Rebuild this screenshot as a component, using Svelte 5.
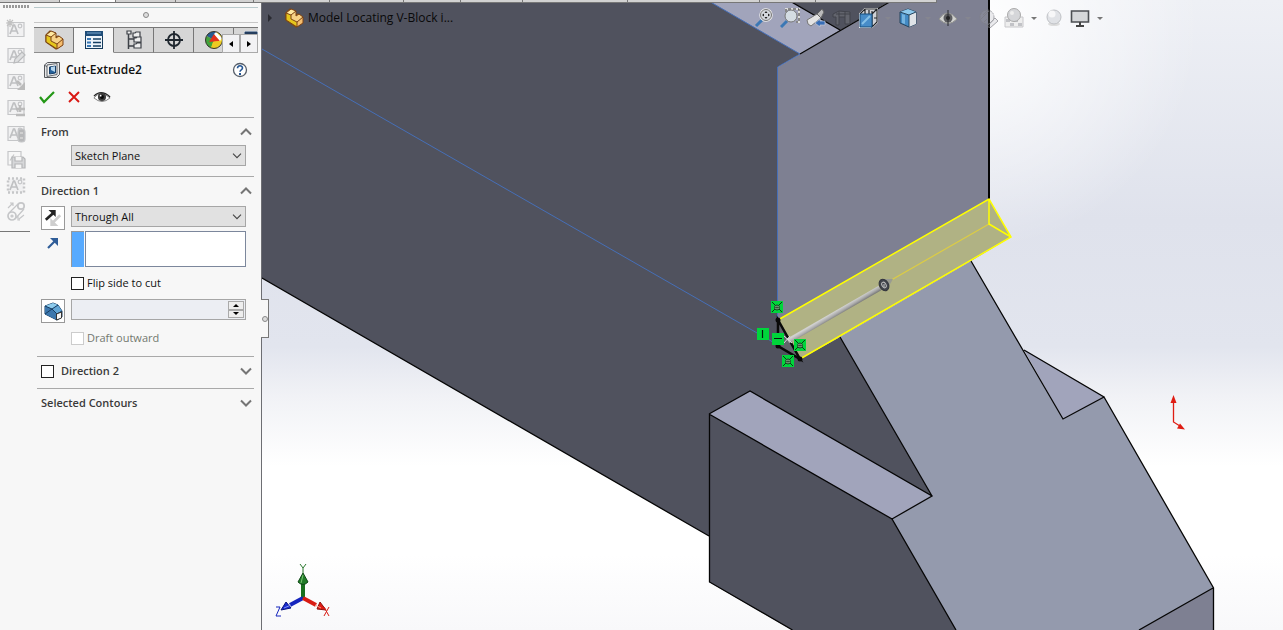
<script>
  const commandTabs = [60, 56, 60, 78, 76, 74, 57, 61, 106, 133, 56, 121];
  const annotationTools = ['New note', 'Edit note', 'Place note', 'Add or remove', 'Note traffic', 'Save note', 'Stamp note', 'Link notes'];
  const marks = [[771, 301], [794, 339], [782, 355]];
  let fromPlane = $state('Sketch Plane');
  let endCondition = $state('Through All');
  let flipSide = $state(false);
  let direction2 = $state(false);
  let draft = $state('');
</script>

{#snippet part()}
  <svg width="20" height="20" viewBox="0 0 20 20" aria-hidden="true">
    <path d="M2 5 6 1l5 2v4l3-1 4 3v6l-6 4L2 12Z" fill="#f0cd3c" stroke="#7b4a14" stroke-width="1.2" stroke-linejoin="round" />
    <path d="m2 5 5 2v4l6 3v5L2 12Z" fill="#e5c61c" />
    <path d="m2 5 5-4 5 2-5 4Z" fill="#ffe9a0" />
    <path d="m7 11 6 3 6-5-4-3-3 2V3L7 7Z" fill="#f7d286" />
    <path d="m13 14 6-5v6l-6 4Z" fill="#f5bd6e" />
    <path d="M2 5v7l11 7v-5L7 11V7L2 5l5-4 5 2v5l3-2 4 3v6l-6 4M7 7l5-4m1 11 6-5" fill="none" stroke="#7d4315" stroke-width="1" stroke-linejoin="round" />
  </svg>
{/snippet}

{#snippet chevron(up)}
  <svg class="chevron" width="12" height="8" viewBox="0 0 12 8" aria-hidden="true">
    <path d={up ? 'm1 6.500 5-5 5 5' : 'm1 1.500 5 5 5-5'} fill="none" stroke="#757575" stroke-width="2" />
  </svg>
{/snippet}

{#snippet selectArrow()}
  <svg class="select-arrow" width="10" height="6" viewBox="0 0 10 6" aria-hidden="true">
    <path d="m1 .7 4 4 4-4" fill="none" stroke="#444" stroke-width="1.1" />
  </svg>
{/snippet}

{#snippet annotation(i)}
  <svg width="20" height="20" viewBox="0 0 20 20" aria-hidden="true" fill="none" stroke="#c5c6c8" stroke-width="1.2">
    {#if i < 5 || i === 6}
      <path d="M2 3.500h16v14H2Z" fill="#f1f1f2" stroke-dasharray={i === 6 ? '2 2' : 'none'} stroke-width={i === 6 ? 2.500 : 1.200} />
      <path d="m4 15 3.500-9h1L12 15M5.500 12h5" stroke="#bfc0c2" stroke-width="1.700" />
      <circle cx="14" cy="7" r="1.800" />
    {/if}
    {#if i === 0}
      <path d="M4 0v8M0 4h8M1 1l6 6M7 1 1 7" stroke="#c2c2c2" />
    {:else if i === 1}
      <path d="m8 18 1-4 7-7 3 3-7 7Z" fill="#dedfe0" stroke="#b9babc" />
    {:else if i === 2}
      <path d="m11 10 4 4" stroke="#bbb" stroke-width="2.500" /><path d="M19 11v8h-8Z" fill="#bbb" stroke="none" />
    {:else if i === 3}
      <path d="M14 8v7m-4-3h9M10 18h9" stroke="#bbb" stroke-width="2.500" />
    {:else if i === 4}
      <rect x="12" y="6" width="7" height="13" rx="3" fill="#b7b8ba" />
      <path d="M14 10h3M14 15h3" stroke="#d0d0d0" stroke-width="2" />
    {:else if i === 5}
      <path d="M2 2.500h13V16H2Zm2 9 4-6" />
      <path d="M6 8h11l2 2v9H6Z" fill="#d6d7d9" stroke="#b5b6b8" />
      <path d="M9 8v4h7V8M9 19v-4h7v4" fill="#f5f5f5" stroke="#b5b6b8" />
    {:else if i === 7}
      <circle cx="6" cy="15" r="4" stroke-width="1.700" /><circle cx="6" cy="15" r="1" />
      <circle cx="15" cy="5" r="3.200" stroke-width="1.700" />
      <path d="m3 12 9-9m-3 15 9-10M2 7l5-5M4 2h3v3m6 13 5-4m-4 5h-2v-4" />
    {/if}
  </svg>
{/snippet}

<div class="app">
  <div class="command-strip" aria-hidden="true">
    {#each commandTabs as size, i}
      <span class:active={i === 1} style:flex-grow={size}></span>
    {/each}
  </div>

  <nav class="annotations" aria-label="Annotations">
    <div class="grip"></div>
    {#each annotationTools as label, i}
      <button type="button" aria-label={label}>{@render annotation(i)}</button>
    {/each}
    <hr />
  </nav>

  <aside class="panel">
    <div class="pin-bar"><i class="knob"></i></div>
    <div class="tabs">
      <button type="button" aria-label="Feature tree">{@render part()}</button>
      <button type="button" class="current" aria-label="Properties">
        <svg width="20" height="20" viewBox="0 0 20 20" aria-hidden="true">
          <rect x="1.500" y="1.500" width="17" height="17" fill="#eef4fa" stroke="#153a5b" />
          <path d="M1 1h18v5H1Z" fill="#204d78" /><path d="M3 3h14" stroke="#76a6cd" />
          <path d="M3 8h4v2H3Zm0 3.500h4v2H3ZM3 15h4v2H3Z" fill="#3878b5" />
          <path d="M9 9h8M9 12.500h8M9 16h8" stroke="#163f63" stroke-width="1.400" />
        </svg>
      </button>
      <button type="button" aria-label="Configurations">
        <svg width="20" height="20" viewBox="0 0 20 20" aria-hidden="true" fill="#eee" stroke="#3e4248" stroke-width="1.200">
          <path d="M4.500 2v17M5 9h5M5 16h5" fill="none" stroke-width="1.500" />
          <path d="M3 1h4v3H3ZM9 3h2l1-1h4v5H9Zm1 5h2l1-1h4v5h-7Zm0 6h2l1-1h4v5h-7Z" />
        </svg>
      </button>
      <button type="button" aria-label="Dimensions">
        <svg width="20" height="20" viewBox="0 0 20 20" aria-hidden="true" fill="none" stroke="#1e262e" stroke-width="1.800">
          <circle cx="10" cy="10" r="6" /><path d="M10 1v18M1 10h18" />
        </svg>
      </button>
      <button type="button" aria-label="Display">
        <svg width="20" height="20" viewBox="0 0 20 20" aria-hidden="true">
          <circle cx="10" cy="10" r="8.500" fill="#f3d72c" />
          <path d="M10 10 2.500 6A8.500 8.500 0 0 0 7 18Z" fill="#42a33a" />
          <path d="M10 10 2.500 6A8.500 8.500 0 0 1 12 2Z" fill="#265d91" />
          <path d="m10 4 6 7-11 1Z" fill="#e2321e" /><path d="m12 2 6 6-2 3-6-7Z" fill="#fff" />
          <path d="m7 18 2-6 7-1 2 2-6 6Z" fill="#edca22" />
          <circle cx="10" cy="10" r="8.500" fill="none" stroke="#333" />
        </svg>
      </button>
      <button type="button" class="clipped" aria-label="Appearance tasks">
        <svg width="14" height="18" viewBox="0 0 14 18" aria-hidden="true"><path d="M1 1h12v15H1Z" fill="#90afd0" stroke="#355b89" /><path d="M1 2h12" stroke="#243d5e" stroke-width="2" /></svg>
      </button>
      <div class="tab-scroll">
        <button type="button" aria-label="Previous tabs"><svg width="4" height="6" viewBox="0 0 4 6"><path d="M4 0v6L0 3Z" /></svg></button>
        <button type="button" aria-label="Next tabs"><svg width="4" height="6" viewBox="0 0 4 6"><path d="M0 0v6l4-3Z" /></svg></button>
      </div>
    </div>

    <header>
      <svg width="18" height="18" viewBox="0 0 18 18" aria-hidden="true">
        <path d="m1.500 4 3-2.500h12v12l-3 3h-12Z" fill="#e6e7e9" stroke="#55585c" />
        <path d="m4 4 10-1.500v11L4 15.500ZM1.500 4 4 6" fill="#f3f3f3" stroke="#62666b" />
        <path d="m6.500 6 6-1v7l-6 1Z" fill="#24609a" stroke="#173f69" /><path d="m8 6 4-.7V11L8 9Z" fill="#b4d4ec" />
      </svg>
      <h1>Cut-Extrude2</h1>
      <button type="button" aria-label="Help">
        <svg width="16" height="16" viewBox="0 0 16 16" aria-hidden="true" fill="none">
          <circle cx="8" cy="8" r="6.500" fill="#fff" stroke="#555d68" stroke-width="1.300" />
          <path d="M5.500 6.300c0-3.300 5-3.300 5-.3C10.500 8 8 7.600 8 9.700" stroke="#245694" stroke-width="1.600" /><path d="M7 11h2v2H7Z" fill="#245694" />
        </svg>
      </button>
    </header>

    <div class="actions">
      <button type="button" aria-label="OK"><svg width="16" height="14" viewBox="0 0 16 14"><path d="m1 7 4 5L15 2" fill="none" stroke="#249817" stroke-width="2.200" /></svg></button>
      <button type="button" aria-label="Cancel"><svg width="12" height="12" viewBox="0 0 12 12"><path d="m1 1 10 10M11 1 1 11" stroke="#d91712" stroke-width="1.900" /></svg></button>
      <button type="button" aria-label="Preview">
        <svg width="18" height="14" viewBox="0 0 20 14"><path d="M1 8Q8-1 19 8q-9 8-18 0Z" fill="#fff" stroke="#777" /><circle cx="10" cy="7" r="4.500" fill="#3c3c3c" /><circle cx="10" cy="7" r="2.200" fill="#080808" /><circle cx="8.500" cy="5.500" r="1" fill="#fff" /><path d="M1 6Q9-2 19 7" fill="none" stroke="#252525" stroke-width="1.300" /></svg>
      </button>
    </div>

    <section>
      <h2><span>From</span><button type="button" aria-label="Collapse From">{@render chevron(true)}</button></h2>
      <div class="fields">
        <label class="select second"><select aria-label="Start condition" bind:value={fromPlane}><option>Sketch Plane</option></select>{@render selectArrow()}</label>
      </div>
    </section>

    <section class="direction">
      <h2><span>Direction 1</span><button type="button" aria-label="Collapse Direction 1">{@render chevron(true)}</button></h2>
      <div class="fields">
        <button type="button" class="tool" aria-label="Reverse direction">
          <svg width="18" height="18" viewBox="0 0 20 20"><path d="M18 7 9 16" fill="none" stroke="#cecece" stroke-width="3" /><path d="M7 10v9h9Z" fill="#cecece" /><path d="M2 12 11 4" stroke="#222" stroke-width="3" /><path d="M5 1h8v8Z" fill="#222" /></svg>
        </button>
        <label class="select"><select aria-label="End condition" bind:value={endCondition}><option>Through All</option></select>{@render selectArrow()}</label>
        <svg class="blue-arrow" width="14" height="14" viewBox="0 0 14 14" aria-hidden="true"><path d="M2 12 9 5" stroke="#2f5d98" stroke-width="2.200" /><path d="M4 2h8v8Z" fill="#2f5d98" /></svg>
        <div class="selection"><i></i><textarea aria-label="Direction of extrusion"></textarea></div>
        <label class="check second"><input type="checkbox" bind:checked={flipSide} />Flip side to cut</label>
        <button type="button" class="tool" aria-label="Draft on or off">
          <svg width="20" height="20" viewBox="0 0 20 20"><path d="m2 5 8-3 5 2 4 6v6l-5 3-12-6Z" fill="#2d699e" stroke="#173c61" /><path d="m2 5 8-3 5 2-6 4Z" fill="#8dcbed" /><path d="m9 8 6-4 4 6-5 3Z" fill="#61a5d5" /><path d="m2 5 7 3 5 5v6L2 13Z" fill="#3c77ad" /><path d="m2 13 7-5M9 8l5 5 5-3M2 5l7 3 6-4" stroke="#173c61" fill="none" /><path d="m13.500 13 5-2v6l-5 2Z" fill="#f6f6f6" stroke="#333" /></svg>
        </button>
        <div class="spinner"><input aria-label="Draft angle" type="text" bind:value={draft} /><span><button type="button" aria-label="Increase"><svg width="6" height="3" viewBox="0 0 6 3"><path d="M0 3h6L3 0Z" /></svg></button><button type="button" aria-label="Decrease"><svg width="6" height="3" viewBox="0 0 6 3"><path d="M0 0h6L3 3Z" /></svg></button></span></div>
        <label class="check second off"><input type="checkbox" disabled />Draft outward</label>
      </div>
    </section>

    <section class="closed">
      <h2><label class="check"><input type="checkbox" bind:checked={direction2} />Direction 2</label><button type="button" aria-label="Expand Direction 2">{@render chevron(false)}</button></h2>
    </section>
    <section class="closed">
      <h2><span>Selected Contours</span><button type="button" aria-label="Expand Selected Contours">{@render chevron(false)}</button></h2>
    </section>
    <div class="splitter"><i class="knob"></i></div>
  </aside>

  <main>
    <svg class="scene" viewBox="262 0 1021 630" preserveAspectRatio="xMinYMin slice" role="img" aria-label="V-block model">
      <defs>
        <linearGradient id="sky" x1="0" y1="0" x2="0" y2="1">
          <stop offset="0" stop-color="#eef0f5" /><stop offset=".35" stop-color="#dfe2ec" /><stop offset=".55" stop-color="#e2e5ee" />
          <stop offset=".63" stop-color="#f1f2f6" /><stop offset=".74" stop-color="#fff" /><stop offset=".88" stop-color="#fff" /><stop offset="1" stop-color="#f8f8fa" />
        </linearGradient>
        <radialGradient id="glow" gradientUnits="userSpaceOnUse" cx="970" cy="20" r="230"><stop offset="0" stop-color="#fff" /><stop offset="1" stop-color="#fff" stop-opacity="0" /></radialGradient>
        <linearGradient id="rod" gradientUnits="userSpaceOnUse" x1="834" y1="312" x2="837" y2="317"><stop offset="0" stop-color="#d0d0d0" /><stop offset=".5" stop-color="#aaa" /><stop offset="1" stop-color="#707070" /></linearGradient>
      </defs>
      <path d="M262 0h1021v630H262Z" fill="url(#sky)" /><path d="M262 0h1021v630H262Z" fill="url(#glow)" />
      <path d="M262 0h630L778 67v278l22 14 40-22 92 159-223 40-447-258Z" fill="#50525e" />
      <path d="M707 0 800 54l40-24L788 0Z" fill="#a1a4bb" />
      <path d="M778 67 893 0h96v200l22 37-40 24-131 76-40 22-22-39Z" fill="#7e8092" />
      <path d="m840 337 131-76 92 158 41-22 109 191-73 42H956l-64-111 40-23Z" fill="#949aad" />
      <path d="m1024 350 80 47-41 22Z" fill="#a1a4bb" />
      <path d="m1213 588v42h-74Z" fill="#7e8092" />
      <path d="m709 414 183 105 64 111H792l-83-48Z" fill="#50525e" />
      <path d="m709 414 41-23 182 105-40 23Z" fill="#a1a4bb" />
      <g fill="none" stroke="#050505" stroke-width="1.300">
        <path d="m262 278 447 258M709.500 414v168l83 48M709 414l183 105 64 111M709 414l41-23 182 105-40 23M840 337l92 159M971 261l92 158 41-22-80-47M1104 397l109.500 191v42M1213 588l-74 42M800 54 893 0M788 0l52 30" />
        <path d="M989 0v200" stroke-width="2" />
      </g>
      <path d="m262 49 516 296M707 0l93 54-22.500 13v250" fill="none" stroke="#466fb7" stroke-width="1" />
      <path d="m778 320 211-121 22 38-211 122Z" fill="#b0b284" />
      <path d="m989 224-211 121" stroke="#ddcd43" stroke-width="1.200" />
      <path d="m778 320 211-121 22 38-211 122M989 199v25l22 13" fill="none" stroke="#ff0" stroke-width="1.500" />
      <path d="M778 320v26l22 13Z" fill="#62636b" stroke="#090909" stroke-width="2.500" />
      <path d="m788 341 92-53" stroke="url(#rod)" stroke-width="5" />
      <path d="m784 336 8 7m-8 0 6-7" stroke="#ddd" />
      <path d="m880 279 13 0-7 12Z" fill="#999b92" />
      <ellipse cx="884" cy="285" rx="4.500" ry="6" transform="rotate(-30 884 285)" fill="#41444c" stroke="#33353d" />
      <ellipse cx="884" cy="285" rx="2" ry="3" transform="rotate(-30 884 285)" fill="none" stroke="#bbb" /><path d="M884 284v3" stroke="#ccc" />
      <g fill="#090909"><circle cx="778" cy="320" r="2.500" /><circle cx="778" cy="346" r="2.500" /><circle cx="800" cy="359" r="2.500" /></g>
      {#each marks as [x, y]}
        <g transform="translate({x} {y})"><path d="M0 0h12v12H0Z" fill="#00d53b" /><path d="m1 11 10-10M1 1l3 3m4 4 3 3" stroke="#063c13" /><circle cx="6" cy="6.500" r="2.500" fill="#8fc493" stroke="#173f20" /><path d="M4 6.500h4m-2-2v4" stroke="#203025" stroke-width=".7" /></g>
      {/each}
      <path d="M757 328h12v12h-12ZM772 333h12v12h-12Z" fill="#00d53b" /><path d="M762.500 330v8M774 338.500h8" stroke="#07180b" stroke-width="1.200" />
      <g fill="#df1c13" stroke="#df1c13" stroke-width="1.300"><path d="M1173.500 400v22l8 5" fill="none" /><path d="m1173.500 395 3 8h-6ZM1185 429.500l-8-1 3-5Z" stroke="none" /></g>
      <g stroke-width="4"><path d="M303 598v-15" stroke="#19701e" /><path d="m303 598-13 7" stroke="#1525bd" /><path d="m303 598 13 7" stroke="#d91c13" /></g>
      <path d="m303 573 5 9q-5 5-10 0Z" fill="#217c28" stroke="#0e4915" /><path d="m303 575-2 8" stroke="#7bc874" />
      <path d="m281 610 5-8 5 6Z" fill="#182bd2" stroke="#0b147a" /><path d="m284 608 7-3" stroke="#8193f4" />
      <path d="m326 610-9-1 3-7Z" fill="#df1c13" stroke="#8a120e" /><path d="m315 605 6 3" stroke="#ff9b8a" />
      <path d="M300 564l3 4 3-4m-3 4v5" stroke="#2a772d" fill="none" /><path d="M276 607h4l-4 9h5" stroke="#1525bd" fill="none" /><path d="m324 607 5 9m0-9-5 9" stroke="#d91c13" />
    </svg>

    <div class="overlay">
      <div class="document"><svg width="4" height="8" viewBox="0 0 4 8" aria-hidden="true"><path d="M0 0v8l4-4Z" fill="#292a31" /></svg>{@render part()}<span>Model Locating V-Block i...</span></div>
      <div class="view-tools">
        <button type="button" aria-label="Zoom to fit"><svg width="20" height="20" viewBox="0 0 20 20"><path d="m2 18 6-6" stroke="#3b78b5" stroke-width="3" /><circle cx="12" cy="7" r="6" fill="#d5d8dd" stroke="#eee" stroke-width="1.500" /><circle cx="12" cy="7" r="5.500" fill="none" stroke="#777" /><path d="m12 3 1.500 2h-3Zm0 8 1.500-2h-3ZM8 7l2-1.500v3Zm8 0-2-1.500v3Z" fill="#222" /></svg></button>
        <button type="button" aria-label="Zoom to area"><svg width="20" height="20" viewBox="0 0 20 20"><path d="M6 4V1h13v13h-3" fill="none" stroke="#ddd" stroke-width="2" /><path d="M6 4V1h13v13h-3" fill="none" stroke="#333" stroke-dasharray="3 2" /><path d="m1 19 6-6" stroke="#3b78b5" stroke-width="3" /><circle cx="11" cy="8" r="6" fill="#d4dce3" stroke="#777" /></svg></button>
        <button type="button" aria-label="Previous view"><svg width="20" height="20" viewBox="0 0 20 20"><path d="m1 12 10-6 4 4-10 8-3-2Z" fill="#e4e4e4" stroke="#777" /><path d="m11 6 5-5 2 3-3 6Z" fill="#bbb" stroke="#666" /><path d="m9 15 5-4v2h5v4h-5v2Z" fill="#386eb7" stroke="#c3cad8" stroke-width=".7" /></svg></button>
        <button type="button" aria-label="Section view"><svg width="20" height="20" viewBox="0 0 20 20" fill="#62646d" stroke="#41434b"><path d="m1 6 6-3 11 1v12h-5V9H7v8H4V9H1Z" /><path d="M7 3v6m6-5v5M4 6h14" /></svg></button>
        <button type="button" aria-label="View orientation"><svg width="20" height="20" viewBox="0 0 20 20"><path d="m2 6 5-5h12v13l-5 5H2Z" fill="#cfd1d6" stroke="#eee" stroke-width="2" /><path d="m2 6 5-5h12v13l-5 5V6l5-5M7 1v5m7-3v3M11 2v4m5 4h3" fill="none" stroke="#24262a" stroke-width="1.200" /><path d="M2 6h12v13H2Z" fill="#478cc8" stroke="#174c7b" /><path d="m4 16 8-8" stroke="#86c0e6" stroke-width="2" /></svg></button>
        <span class="caret faint"></span>
        <button type="button" aria-label="Display style"><svg width="20" height="20" viewBox="0 0 20 20"><path d="m2 4 8-3 8 3v12l-7 3-9-4Z" fill="#438ac4" stroke="#25445e" /><path d="m2 4 8-3 8 3-8 3Z" fill="#8ec9ec" /><path d="m11 7 7-3v12l-7 3Z" fill="#dfe3e7" /><path d="m4 6 3 1v9l-3-1Z" fill="#76b4df" /><path d="m2 4 9 3v12m0-12 7-3" stroke="#29475f" fill="none" /></svg></button>
        <span class="caret faint"></span>
        <button type="button" aria-label="Hide or show"><svg width="20" height="20" viewBox="0 0 20 20"><path d="M1 11q8-12 18 0-9 9-18 0Z" fill="#d0d1d0" stroke="#92938f" /><circle cx="10" cy="10" r="4.500" fill="#5c5d60" /><circle cx="10" cy="10" r="2" fill="#222" /><path d="M10 2v16" stroke="#26282c" /></svg></button>
        <span class="caret faint"></span>
        <button type="button" aria-label="Appearance"><svg class="pale" width="20" height="20" viewBox="0 0 20 20" stroke="#808188" fill="#a7a8ae" fill-opacity=".3"><circle cx="9" cy="9" r="7" stroke-dasharray="2 1" /><path d="m5 7 5-5M3 11l8-8m-5 11 3-3m0 7 8-8 3 3-8 7Z" /></svg></button>
        <button type="button" aria-label="Scene"><svg width="20" height="20" viewBox="0 0 20 20"><path d="M1 9h18v10H1Z" fill="#eee" stroke="#c8c8cb" /><path d="M2 11h4v3H2m8-3h4v3h-4M6 15h4v3H6m8-3h4v3h-4" fill="#c2c3c7" /><circle cx="10" cy="7" r="6.500" fill="#d5d6d9" stroke="#aaa" /><circle cx="8" cy="5" r="2" fill="#eee" /></svg></button>
        <span class="caret"></span>
        <button type="button" aria-label="Render"><svg width="20" height="20" viewBox="0 0 20 20"><ellipse cx="10" cy="16" rx="6" ry="2" fill="#ddd" /><circle cx="10" cy="9" r="7" fill="#e0e2e6" stroke="#bfc1c5" /><circle cx="8" cy="6" r="3.500" fill="#f7f7f8" /></svg></button>
        <button type="button" aria-label="View settings"><svg width="20" height="20" viewBox="0 0 20 20"><path d="M1.500 3h17v11h-17Z" fill="#d5d7d9" stroke="#4c4f53" stroke-width="1.600" /><path d="M10 14v3m-4 1h8" stroke="#444" stroke-width="2" /></svg></button>
        <span class="caret"></span>
      </div>
    </div>
  </main>
</div>

<style>
  :global(body) { margin: 0; }
  .app { display: grid; grid-template: 3px minmax(627px, 1fr) / 32px 230px minmax(0, 1fr); min-height: 100vh; overflow: hidden; background: #f7f7f7; color: #111; font: 11px/16px "Open Sans", "Noto Sans", sans-serif; }
  button { display: grid; place-items: center; padding: 0; border: 0; background: none; color: inherit; font: inherit; }
  svg { display: block; }
  .command-strip { grid-area: 1 / 1 / 2 / 4; z-index: 2; display: flex; width: 73%; }
  .command-strip span { flex-basis: 0; box-sizing: border-box; border-right: 1px solid #777; border-bottom: 1px solid #777; background: #d2d2d2; }
  .command-strip .active { background: #fff; }

  .annotations { grid-area: 2 / 1; display: flex; flex-direction: column; align-items: center; padding-top: 2px; }
  .annotations button { width: 32px; height: 26px; }
  .grip { width: 26px; height: 3px; margin-bottom: 8px; background: repeating-linear-gradient(90deg, #999 0 2px, transparent 2px 3px); }
  .annotations hr { width: 30px; margin: 7px 2px 0 0; border: 0; border-top: 1px solid #777; }

  .panel { grid-area: 2 / 2; position: relative; border-right: 1px solid #6d6e73; box-sizing: border-box; padding: 4px 7px 0 2px; }
  .pin-bar { display: grid; place-items: center; height: 14px; margin-right: -4px; border-top: 1px solid #b9c9cc; border-bottom: 1px solid #c6c6c6; }
  .knob { width: 4px; height: 4px; border: 1px solid #888; border-radius: 50%; background: #ddd; }
  .tabs { display: flex; height: 25px; margin: 4px -4px 0 0; border-top: 1px solid #777; position: relative; }
  .tabs > button { width: 40px; box-sizing: border-box; border-right: 1px solid #777; border-bottom: 1px solid #8d8d8d; background: #d6d6d6; }
  .tabs > .current { background: #f7f7f7; border-bottom-color: #f7f7f7; }
  .tabs > .clipped { flex: 1; justify-content: end; border-right: 0; }
  .tab-scroll { position: absolute; right: 0; bottom: 0; display: flex; }
  .tab-scroll button { width: 18px; height: 19px; box-sizing: border-box; border: 1px solid #aaa; background: #f2f2f4; }

  header { display: flex; align-items: center; gap: 5px; height: 34px; padding: 0 6px 0 9px; }
  h1, h2 { margin: 0; }
  h1 { flex: 1; font-size: 12px; line-height: 18px; font-weight: 600; }
  .actions { display: flex; align-items: center; gap: 13px; height: 20px; padding-left: 5px; }
  section { margin-left: 3px; padding: 6px 8px 0 4px; border-top: 1px solid #a9a9a9; }
  section:first-of-type { margin-top: 10px; }
  h2 { display: flex; align-items: center; justify-content: space-between; color: #3a3a3a; font-size: 11px; line-height: 16px; font-weight: 600; }
  h2 button { width: 16px; height: 16px; margin-right: -8px; }
  .fields { display: grid; grid-template-columns: 24px minmax(0, 1fr); column-gap: 6px; margin-top: 5px; padding-bottom: 10px; align-items: start; }
  .direction .fields { grid-template-rows: 21px 36px 24px 23px 24px; row-gap: 4px; margin-top: 7px; padding-bottom: 6px; }
  .second { grid-column: 2; }
  .select { display: grid; height: 21px; }
  .select select { grid-area: 1 / 1; min-width: 0; width: 100%; appearance: none; border: 1px solid #a6a6a6; border-radius: 0; background: #e1e1e1; color: #111; padding: 0 20px 0 3px; font: inherit; }
  .select-arrow { grid-area: 1 / 1; place-self: center end; margin-right: 4px; pointer-events: none; }
  .tool { width: 24px; height: 24px; border: 1px solid #999; background: #fff; box-sizing: border-box; }
  .blue-arrow { place-self: start center; margin-top: 5px; }
  .selection { display: grid; grid-template-columns: 13px minmax(0, 1fr); gap: 1px; height: 36px; }
  .selection i { background: #57aaff; border: 1px solid #999; border-width: 1px 0 0 1px; }
  textarea { display: block; height: 36px; box-sizing: border-box; resize: none; border: 1px solid #7c879c; border-radius: 0; background: #fff; padding: 2px; outline: 0; font: inherit; }
  .check { display: flex; align-items: center; gap: 3px; }
  .direction .check { align-self: center; }
  .check input { appearance: none; width: 13px; height: 13px; box-sizing: border-box; margin: 0; border: 1px solid #222; background: #fff; }
  .check.off { color: #73776f; }
  .check.off input { border-color: #ccc; }
  h2 .check { gap: 7px; }
  .spinner { display: grid; grid-template-columns: minmax(0, 1fr) 16px; height: 21px; box-sizing: border-box; border: 1px solid #a6a6a6; background: #eceef3; padding: 1px; }
  .spinner input { min-width: 0; border: 0; background: transparent; padding: 0 3px; font: inherit; }
  .spinner span { display: grid; }
  .spinner button { border: 1px solid #aaa; background: #eee; }
  .closed { padding-bottom: 9px; }
  .splitter { position: absolute; left: 229px; top: 296px; display: grid; place-items: center; width: 7px; height: 37px; border: 1px solid #777; border-left: 0; background: #f7f7f7; z-index: 3; }

  main { grid-area: 1 / 3 / 3 / 4; position: relative; min-width: 0; }
  .scene { position: absolute; inset: 0; width: 100%; height: 100%; }
  .overlay { position: relative; display: flex; align-items: center; justify-content: space-between; height: 20px; padding: 8px 176px 0 6px; }
  .document { display: flex; align-items: center; color: #090909; white-space: nowrap; }
  .document span { margin-left: 4px; font-size: 12px; }
  .document > :global(svg:first-child) { margin-right: 12px; }
  .view-tools { display: flex; align-items: center; }
  .view-tools button { width: 26px; height: 20px; }
  .caret { display: grid; place-items: center; width: 14px; }
  .caret::before { content: ""; border: 3px solid transparent; border-top-color: #777; border-bottom: 0; }
  .caret.faint::before { border-top-color: #858690; }
  .pale { opacity: .7; }
</style>
